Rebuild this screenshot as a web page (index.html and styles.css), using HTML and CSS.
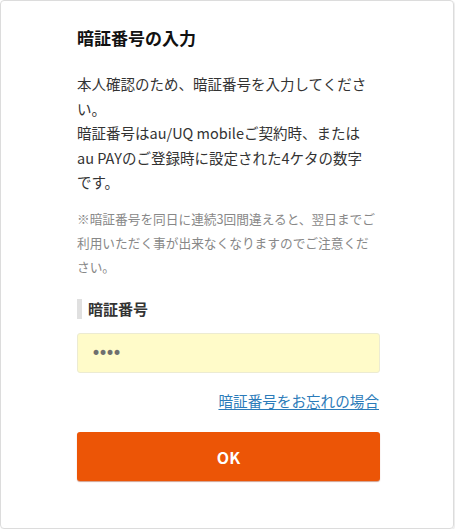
FILE: index.html
```html
<!DOCTYPE html>
<html lang="ja">
<head>
<meta charset="utf-8">
<title>暗証番号の入力</title>
<link rel="stylesheet" href="styles.css">
</head>
<body>
<main class="card">
  <div class="content">
    <h1 class="title">暗証番号の入力</h1>
    <p class="lead">本人確認のため、暗証番号を入力してください。<br>暗証番号はau/UQ mobileご契約時、または<span class="nw">au PAYの</span>ご登録時に設定された4ケタの数字<span class="nw">です。</span></p>
    <p class="note">※暗証番号を同日に連続3回間違えると、翌日までご利用いただく事が出来なくなりますのでご注意ください。</p>
    <label class="label" for="pin">暗証番号</label>
    <input class="pin" id="pin" type="password" value="1234">
    <div class="forgot-row"><a class="forgot" href="#">暗証番号をお忘れの場合</a></div>
    <button class="ok" type="button">OK</button>
  </div>
</main>
</body>
</html>
```
FILE: styles.css
```css
html, body {
  margin: 0;
  padding: 0;
  background: #fff;
}
body {
  font-family: "Noto Sans CJK JP", "Noto Sans", sans-serif;
  color: #333;
}
.card {
  box-sizing: border-box;
  width: 454px;
  height: 529px;
  border: 1px solid #dcdcdc;
  border-radius: 4px;
  box-shadow: 1px 1px 1px rgba(0, 0, 0, 0.08);
  padding: 25px 0 0 76px;
}
.content {
  width: 302px;
  display: flex;
  flex-direction: column;
}
.title {
  margin: 0;
  font-size: 17px;
  line-height: 24px;
  font-weight: 700;
  color: #111;
}
.lead {
  margin: 22px 0 0;
  font-size: 14.5px;
  line-height: 24.5px;
  color: #333;
}
.nw {
  white-space: nowrap;
}
.note {
  margin: 12px 0 0;
  font-size: 12.7px;
  line-height: 24.3px;
  color: #888;
}
.label {
  margin-top: 20px;
  font-size: 15px;
  line-height: 20px;
  font-weight: 700;
  color: #333;
  border-left: 5px solid #e0e0e0;
  padding-left: 6px;
}
.pin {
  box-sizing: border-box;
  margin: 14px 0 0;
  width: 303px;
  height: 40px;
  background: #fffbc9;
  border: 1px solid #ecebd2;
  border-radius: 3px;
  padding: 0 13px;
  font-family: "DejaVu Sans", sans-serif;
  font-size: 17px;
  letter-spacing: -3px;
  color: #6f6f6f;
  outline: none;
}
.forgot-row {
  margin-top: 18px;
  display: flex;
  justify-content: flex-end;
}
.forgot {
  font-size: 14.6px;
  line-height: 20px;
  color: #2b7bb9;
  text-decoration: underline;
  text-underline-offset: 2px;
}
.ok {
  margin-top: 21px;
  width: 303px;
  height: 49px;
  border: 0;
  border-radius: 3px;
  background: #ec5506;
  box-shadow: 0 1px 1px rgba(150, 40, 0, 0.45);
  color: #fff;
  font-family: "Noto Sans CJK JP", "Noto Sans", sans-serif;
  font-size: 16px;
  font-weight: 700;
  cursor: pointer;
}
```
